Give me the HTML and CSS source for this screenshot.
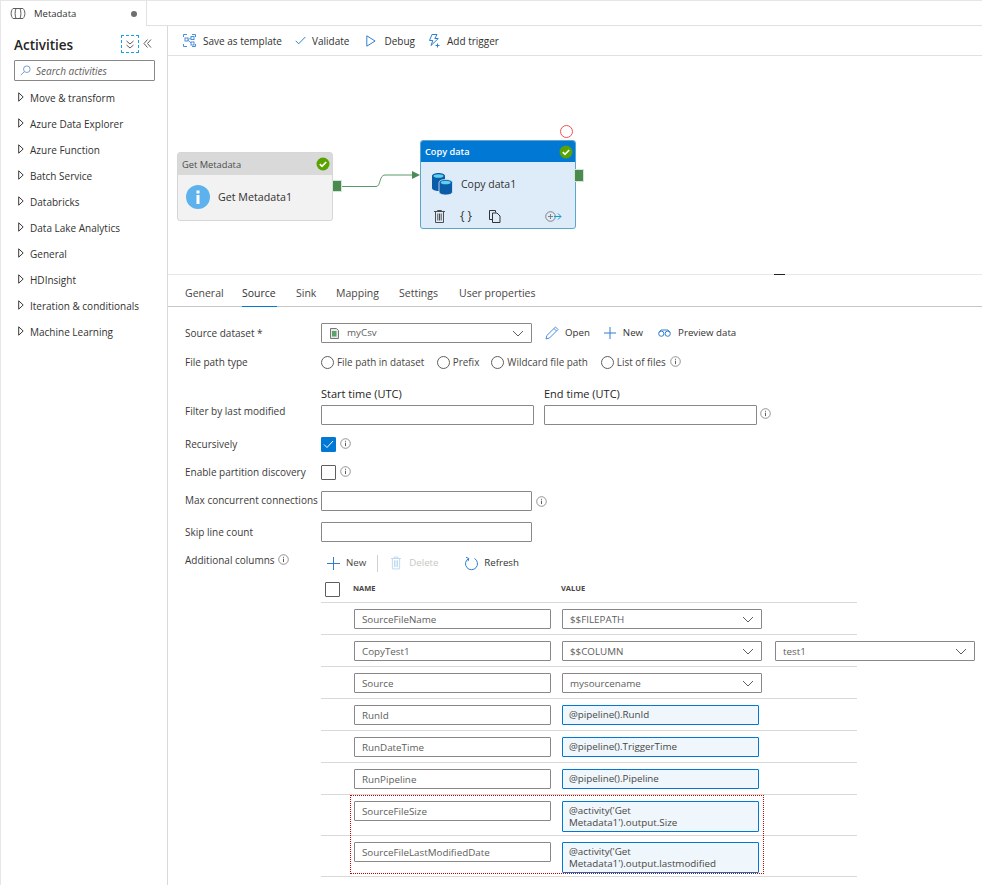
FILE: index.html
```html
<!DOCTYPE html>
<html lang="en">
<head>
<meta charset="utf-8">
<title>Metadata</title>
<link rel="stylesheet" href="styles.css">
</head>
<body>
<svg class="defs" width="0" height="0" aria-hidden="true">
  <symbol id="info" viewBox="0 0 11 11"><circle cx="5.5" cy="5.5" r="4.8" fill="none" stroke="#8a8886" stroke-width=".9"/><path d="M5.5 4.7v3.4" stroke="#605e5c" stroke-width="1"/><path d="M5.5 2.8v1" stroke="#605e5c" stroke-width="1"/></symbol>
  <symbol id="chev" viewBox="0 0 12 7"><path d="M1 1l5 5 5-5" fill="none" stroke="#605e5c" stroke-width="1"/></symbol>
  <symbol id="ok" viewBox="0 0 14 14"><circle cx="7" cy="7" r="6.5" fill="#57a300"/><path d="M3.8 7.2l2.2 2.2 4.2-4.4" fill="none" stroke="#fff" stroke-width="1.7"/></symbol>
  <symbol id="tri" viewBox="0 0 6 10"><path d="M.7.8l4.5 4.2L.7 9.2z" fill="none" stroke="#3b3a39" stroke-width="1"/></symbol>
</svg>

<header class="tabbar">
  <div class="doc-tab">
    <svg class="tab-icon" width="16" height="11" viewBox="0 0 16 11"><path d="M3 .5h10c2.500 2.500 2.500 7.500 0 10H3C.5 8 .5 3 3 .5zM6 .5c-1.200 3-1.200 7 0 10M10 .5c1.200 3 1.200 7 0 10" fill="none" stroke="#605e5c" stroke-width="1"/></svg>
    <span class="tab-name">Metadata</span>
    <span class="dot"></span>
  </div>
</header>

<div class="shell">
  <aside class="sidebar">
    <div class="side-head">
      <h1 class="side-title">Activities</h1>
      <span class="expand"><svg width="10" height="9" viewBox="0 0 10 9"><path d="M1.500 1l3.500 3 3.500-3M1.500 5l3.500 3 3.500-3" fill="none" stroke="#605e5c" stroke-width="1"/></svg></span>
      <svg class="collapse" width="9" height="9" viewBox="0 0 9 9"><path d="M4.500.5L1 4.500l3.500 4M8 .5L4.500 4.500l3.500 4" fill="none" stroke="#605e5c" stroke-width="1"/></svg>
    </div>
    <div class="search">
      <svg width="11" height="11" viewBox="0 0 11 11"><circle cx="6.800" cy="4.200" r="3.300" fill="none" stroke="#7a9fd0" stroke-width="1"/><path d="M4.400 6.600L.8 10.200" stroke="#7a9fd0" stroke-width="1"/></svg>
      <span>Search activities</span>
    </div>
    <ul class="activity-list">
      <li><svg width="6" height="10"><use href="#tri"/></svg>Move &amp; transform</li>
      <li><svg width="6" height="10"><use href="#tri"/></svg>Azure Data Explorer</li>
      <li><svg width="6" height="10"><use href="#tri"/></svg>Azure Function</li>
      <li><svg width="6" height="10"><use href="#tri"/></svg>Batch Service</li>
      <li><svg width="6" height="10"><use href="#tri"/></svg>Databricks</li>
      <li><svg width="6" height="10"><use href="#tri"/></svg>Data Lake Analytics</li>
      <li><svg width="6" height="10"><use href="#tri"/></svg>General</li>
      <li><svg width="6" height="10"><use href="#tri"/></svg>HDInsight</li>
      <li><svg width="6" height="10"><use href="#tri"/></svg>Iteration &amp; conditionals</li>
      <li><svg width="6" height="10"><use href="#tri"/></svg>Machine Learning</li>
    </ul>
  </aside>

  <main class="main">
    <div class="toolbar">
      <span class="tool tool-save">
        <svg width="13" height="13" viewBox="0 0 13 13"><path d="M.5 3V.5H4M9 .5h3.500V3M12.500 10v2.500H9M4 12.500H.5V10" fill="none" stroke="#4a8fd8" stroke-width="1"/><rect x="2" y="4" width="3" height="3" fill="none" stroke="#4a8fd8"/><rect x="8" y="2.500" width="3" height="3" fill="none" stroke="#4a8fd8"/><rect x="8" y="8" width="3" height="3" fill="none" stroke="#4a8fd8"/><path d="M5 5.500l3-1.500M5 6l3 3" stroke="#4a8fd8" stroke-width=".8"/></svg>
        Save as template</span>
      <span class="tool tool-validate">
        <svg width="11" height="9" viewBox="0 0 11 9"><path d="M.7 4.800l3 3L10.300 1" fill="none" stroke="#2f7fd0" stroke-width="1"/></svg>
        Validate</span>
      <span class="tool tool-debug">
        <svg width="10" height="12" viewBox="0 0 10 12"><path d="M.8.8l8.300 5.200L.8 11.200z" fill="none" stroke="#2f7fd0" stroke-width="1"/></svg>
        Debug</span>
      <span class="tool tool-trigger">
        <svg width="12" height="14" viewBox="0 0 12 14"><path d="M4 .5h5L6.800 4.500h3.500L3 11.500l1.800-5H1.500z" fill="none" stroke="#2f7fd0" stroke-width="1"/><path d="M9.500 9.500v4M7.500 11.500h4" stroke="#2f7fd0" stroke-width="1"/></svg>
        Add trigger</span>
    </div>

    <section class="canvas">
      <svg class="wire" width="90" height="30" viewBox="0 0 90 30">
        <path d="M2 22.500H37c5 0 3-11.500 9-11.500H73" fill="none" stroke="#5c9a6a" stroke-width="1"/>
        <path d="M73 7l8 4-8 4z" fill="#4a8b57"/>
      </svg>
      <div class="node node-meta">
        <div class="node-head">Get Metadata<svg class="node-ok" width="14" height="14"><use href="#ok"/></svg></div>
        <div class="node-body">
          <svg width="24" height="24" viewBox="0 0 24 24"><circle cx="12" cy="12" r="12" fill="#5db2ee"/><rect x="10.500" y="10" width="3" height="9" fill="#fff"/><rect x="10.500" y="5.500" width="3" height="3" fill="#fff"/></svg>
          <span>Get Metadata1</span>
        </div>
      </div>
      <span class="handle handle-meta"></span>
      <span class="red-ring"></span>
      <div class="node node-copy">
        <div class="node-head">Copy data<svg class="node-ok" width="14" height="14"><use href="#ok"/></svg></div>
        <div class="node-body">
          <svg width="21" height="22" viewBox="0 0 21 22"><path d="M0 3c0-4 13-4 13 0v12c0 4-13 4-13 0z" fill="#0b5ca8"/><ellipse cx="6.500" cy="3" rx="5" ry="1.800" fill="#5fd0ee"/><path d="M7 9.500c0-4 13.500-4 13.500 0v9.500c0 4-13.500 4-13.500 0z" fill="#0b5ca8" stroke="#deecf9" stroke-width=".8"/><ellipse cx="13.700" cy="9.500" rx="5" ry="1.800" fill="#5fd0ee"/></svg>
          <span>Copy data1</span>
        </div>
        <div class="node-actions">
          <svg width="11" height="13" viewBox="0 0 11 13"><path d="M0 1.500h11M3.500 1.500V.5h4v1M1.500 1.500v11h8v-11M3.800 3.500v7M5.500 3.500v7M7.200 3.500v7" fill="none" stroke="#4d4d4d" stroke-width="1"/></svg>
          <span class="braces">{ }</span>
          <svg width="12" height="13" viewBox="0 0 12 13"><path d="M.5.500h6v2M.5.500v9h3" fill="none" stroke="#333" stroke-width="1"/><path d="M3.500 3h4.500l3 3v6.500h-7.500z" fill="none" stroke="#333" stroke-width="1"/></svg>
          <svg class="go" width="17" height="11" viewBox="0 0 17 11"><circle cx="5.500" cy="5.500" r="4.800" fill="none" stroke="#777" stroke-width=".9"/><path d="M3 5.500h5M5.500 3v5" stroke="#777" stroke-width=".9"/><path d="M9 5.500h7M13 2.500l3 3-3 3" fill="none" stroke="#1a9bd7" stroke-width="1"/></svg>
        </div>
      </div>
      <span class="handle handle-copy"></span>
      <span class="grip"></span>
    </section>

    <nav class="tabs">
      <span class="tab">General</span>
      <span class="tab active">Source</span>
      <span class="tab">Sink</span>
      <span class="tab">Mapping</span>
      <span class="tab">Settings</span>
      <span class="tab">User properties</span>
    </nav>

    <section class="form">
      <div class="row row-dataset">
        <label class="label">Source dataset *</label>
        <div class="select select-dataset">
          <svg class="file" width="9" height="11" viewBox="0 0 9 11"><path d="M.5.500h6l2 2v8h-8z" fill="#e8e8e8" stroke="#777"/><rect x="2" y="3" width="4.500" height="5.500" fill="#5aa469"/></svg>
          <span class="sel-text">myCsv</span>
          <svg class="chev" width="12" height="7"><use href="#chev"/></svg>
        </div>
        <span class="act act-open">
          <svg width="14" height="14" viewBox="0 0 14 14"><path d="M1 13l.8-3.500L10.500 1l2.500 2.500L4.500 12z" fill="none" stroke="#4a8fd8" stroke-width="1"/><path d="M9 2.500L11.500 5" stroke="#4a8fd8"/></svg>
          Open</span>
        <span class="act act-new">
          <svg width="12" height="12" viewBox="0 0 12 12"><path d="M6 0v12M0 6h12" stroke="#2f7fd0" stroke-width="1"/></svg>
          New</span>
        <span class="act act-preview">
          <svg width="13" height="8" viewBox="0 0 13 8"><circle cx="3.300" cy="4.700" r="2.600" fill="none" stroke="#2f7fd0"/><circle cx="9.700" cy="4.700" r="2.600" fill="none" stroke="#2f7fd0"/><path d="M1 3.500L3 1h7l2 2.500" fill="none" stroke="#2f7fd0"/></svg>
          Preview data</span>
      </div>

      <div class="row row-path">
        <label class="label">File path type</label>
        <div class="radios">
          <span class="radio r1"><i></i>File path in dataset</span>
          <span class="radio r2"><i></i>Prefix</span>
          <span class="radio r3"><i></i>Wildcard file path</span>
          <span class="radio"><i></i>List of files<svg class="info-inline" width="11" height="11"><use href="#info"/></svg></span>
        </div>
      </div>

      <div class="row row-time">
        <label class="label">Filter by last modified</label>
        <div class="time-col">
          <span class="time-label">Start time (UTC)</span>
          <span class="input input-time"></span>
        </div>
        <div class="time-col">
          <span class="time-label">End time (UTC)</span>
          <span class="input input-time"></span>
        </div>
        <svg class="info-time" width="11" height="11"><use href="#info"/></svg>
      </div>

      <div class="row row-rec">
        <label class="label label-up">Recursively</label>
        <span class="check checked"><svg width="11" height="9" viewBox="0 0 11 9"><path d="M1 4.500l3 3 6-6.500" fill="none" stroke="#fff" stroke-width="1"/></svg></span>
        <svg class="info-check" width="11" height="11"><use href="#info"/></svg>
      </div>

      <div class="row row-part">
        <label class="label label-up">Enable partition discovery</label>
        <span class="check"></span>
        <svg class="info-check" width="11" height="11"><use href="#info"/></svg>
      </div>

      <div class="row row-max">
        <label class="label label-up">Max concurrent connections</label>
        <span class="input input-wide"></span>
        <svg class="info-max" width="11" height="11"><use href="#info"/></svg>
      </div>

      <div class="row row-skip">
        <label class="label">Skip line count</label>
        <span class="input input-wide"></span>
      </div>

      <div class="row row-add">
        <label class="label label-add">Additional columns<svg class="info-add" width="11" height="11"><use href="#info"/></svg></label>
        <div class="add-tools">
          <span class="add-tool add-new"><svg width="13" height="13" viewBox="0 0 13 13"><path d="M6.500 0v13M0 6.500h13" stroke="#2f7fd0" stroke-width="1"/></svg>New</span>
          <span class="sep"></span>
          <span class="add-tool add-del"><svg width="10" height="14" viewBox="0 0 11 14"><path d="M0 2h11M3.500 2V.5h4V2M1.500 2v11.500h8V2M3.800 4v7.500M5.500 4v7.500M7.200 4v7.500" fill="none" stroke="#b9d6ee" stroke-width="1"/></svg>Delete</span>
          <span class="add-tool add-ref"><svg width="15" height="15" viewBox="0 0 14 15"><path d="M4 2.500a6 6 0 1 0 6 0" fill="none" stroke="#2f7fd0" stroke-width="1"/><path d="M1.500 1.200L4.300 2.500 3.500 5.300" fill="none" stroke="#2f7fd0" stroke-width="1"/></svg>Refresh</span>
        </div>
      </div>

      <div class="table">
        <div class="thead">
          <span class="check head-check"></span>
          <span class="th th-name">NAME</span>
          <span class="th">VALUE</span>
        </div>
        <div class="tr">
          <span class="input cell-name">SourceFileName</span>
          <div class="select cell-sel"><span class="sel-text">$$FILEPATH</span><svg class="chev" width="12" height="7"><use href="#chev"/></svg></div>
        </div>
        <div class="tr">
          <span class="input cell-name">CopyTest1</span>
          <div class="select cell-sel"><span class="sel-text">$$COLUMN</span><svg class="chev" width="12" height="7"><use href="#chev"/></svg></div>
          <div class="select cell-extra"><span class="sel-text">test1</span><svg class="chev" width="12" height="7"><use href="#chev"/></svg></div>
        </div>
        <div class="tr">
          <span class="input cell-name">Source</span>
          <div class="select cell-sel"><span class="sel-text">mysourcename</span><svg class="chev" width="12" height="7"><use href="#chev"/></svg></div>
        </div>
        <div class="tr">
          <span class="input cell-name">RunId</span>
          <span class="expr">@pipeline().RunId</span>
        </div>
        <div class="tr">
          <span class="input cell-name">RunDateTime</span>
          <span class="expr">@pipeline().TriggerTime</span>
        </div>
        <div class="tr">
          <span class="input cell-name">RunPipeline</span>
          <span class="expr">@pipeline().Pipeline</span>
        </div>
        <div class="tr tr-tall">
          <span class="input cell-name">SourceFileSize</span>
          <span class="expr expr-tall">@activity('Get<br>Metadata1').output.Size</span>
        </div>
        <div class="tr tr-tall">
          <span class="input cell-name">SourceFileLastModifiedDate</span>
          <span class="expr expr-tall">@activity('Get<br>Metadata1').output.lastmodified</span>
        </div>
        <span class="red-box"></span>
      </div>
    </section>
  </main>
</div>
</body>
</html>
```

FILE: styles.css
```css
* { box-sizing: border-box; }
html, body { margin: 0; height: 100%; }
body {
  width: 982px;
  height: 885px;
  overflow: hidden;
  background: #fff;
  color: #323130;
  font: 10px/14px "Open Sans", "Noto Sans", sans-serif;
}
.defs { position: absolute; }

.tabbar {
  height: 26px;
  border-top: 1px solid #e6e6e6;
  border-bottom: 1px solid #e1e1e1;
  border-left: 1px solid #e6e6e6;
  display: flex;
}
.doc-tab {
  width: 146px;
  height: 25px;
  background: #fff;
  border-right: 1px solid #e1e1e1;
  display: flex;
  align-items: center;
  padding-left: 9px;
  margin-bottom: -1px;
}
.tab-name { margin-left: 8px; flex: 1; font-size: 9.500px; }
.dot { width: 6px; height: 6px; border-radius: 50%; background: #6e6e6e; margin-right: 9px; }

.shell { display: flex; height: 859px; }
.sidebar {
  width: 168px;
  flex: none;
  border-left: 1px solid #e6e6e6;
  border-right: 1px solid #d9d9d9;
  padding: 8px 18px 0 13px;
}
.side-head { display: flex; align-items: flex-start; height: 26px; position: relative; }
.side-title { margin: 1px 0 0; font-size: 13.500px; line-height: 20px; font-weight: 600; flex: 1; color: #252423; }
.expand {
  width: 18px; height: 18px;
  border: 1px dashed #17a2e8;
  display: flex; align-items: center; justify-content: center;
  margin-top: 1px;
}
.collapse { margin: 5px -3px 0 4px; }
.search {
  height: 21px;
  width: 141px;
  flex: none;
  border: 1px solid #8a8886;
  border-radius: 1px;
  display: flex;
  align-items: center;
  gap: 5px;
  padding-left: 5px;
  color: #605e5c;
  font-style: italic;
  font-size: 10px;
}
.activity-list { list-style: none; margin: 4px 0 0; padding: 0; width: 145px; }
.activity-list li {
  height: 26px;
  display: flex;
  align-items: center;
  padding-left: 4px;
  gap: 6px;
  color: #323130;
  font-weight: 500;
  font-size: 10px;
  white-space: nowrap;
}
.activity-list li svg { margin-top: -3px; }

.main { flex: 1; min-width: 0; display: flex; flex-direction: column; }
.toolbar {
  height: 30px;
  flex: none;
  border-bottom: 1px solid #e1e1e1;
  display: flex;
  align-items: center;
  padding-left: 15px;
}
.tool { display: flex; align-items: center; gap: 7px; }
.tool-save { margin-right: 13px; }
.tool-validate { margin-right: 17px; gap: 6px; }
.tool-debug { margin-right: 13px; gap: 8px; }
.tool-trigger { gap: 7px; }

.canvas {
  position: relative;
  height: 219px;
  flex: none;
  border-bottom: 1px solid #e8e8e8;
}
.wire { position: absolute; left: 171px; top: 108px; }
.node { position: absolute; border-radius: 3px; }
.node-head {
  height: 22px;
  display: flex;
  align-items: center;
  justify-content: space-between;
  padding: 1px 2px 0 4px;
  font-size: 9.300px;
}
.node-ok { margin-top: -1px; }
.node-meta {
  left: 9px; top: 96px;
  width: 156px; height: 69px;
  background: #f2f2f2;
  border: 1px solid #d6d6d6;
}
.node-meta .node-head { background: #d9d9d9; color: #4c4c4c; }
.node-meta .node-head, .node-copy .node-head { border-radius: 2px 2px 0 0; }
.node-meta .node-body { display: flex; align-items: center; gap: 8px; padding: 10px 0 0 8px; font-size: 10.700px; }
.node-copy {
  left: 252px; top: 84px;
  width: 156px; height: 89px;
  background: #deecf9;
  border: 1px solid #5aa7c9;
}
.node-copy .node-head { background: #0078d4; color: #fff; font-weight: 600; height: 21px; font-size: 9.200px; }
.node-copy .node-body { display: flex; align-items: center; gap: 8px; padding: 11px 0 0 11px; font-size: 10.500px; }
.node-actions { display: flex; align-items: center; padding: 11px 0 0 13px; height: 31px; }
.braces { margin-left: 15px; font-size: 12px; color: #333; width: 14px; white-space: nowrap; }
.node-actions .braces + svg { margin-left: 15px; }
.go { margin-left: 44px; }
.handle { position: absolute; width: 8px; height: 10px; background: #4b8b4f; box-shadow: 0 0 0 1px #d3e5d6; }
.handle-meta { left: 165px; top: 125px; }
.handle-copy { left: 407px; top: 114px; height: 11px; }
.red-ring {
  position: absolute; left: 392px; top: 69px;
  width: 13px; height: 13px;
  border: 1px solid #f25050;
  border-radius: 50%;
}
.grip { position: absolute; left: 606px; top: 218px; width: 11px; height: 1px; background: #222; }

.tabs {
  height: 32px;
  flex: none;
  border-bottom: 1px solid #c8c6c4;
  display: grid;
  grid-template-columns: 57px 54px 40px 63px 60px auto;
  justify-items: start;
  padding-left: 17px;
}
.tab { height: 32px; padding: 11px 1px 0 0; font-size: 10.500px; color: #484644; }
.tab.active { border-bottom: 1px solid #0078d4; color: #323130; }

.form { padding: 16px 0 0 17px; position: relative; }
.row { display: flex; }
.label { width: 136px; flex: none; font-weight: 500; color: #3b3a39; white-space: nowrap; }
.label-up { margin-top: -2px; }
.input {
  display: block;
  height: 20px;
  border: 1px solid #8a8886;
  border-radius: 1px;
  background: #fff;
  flex: none;
}
.select {
  height: 20px;
  border: 1px solid #8a8886;
  border-radius: 1px;
  display: flex;
  align-items: center;
  padding: 0 7px;
  flex: none;
  color: #605e5c;
  font-size: 9.800px;
}
.sel-text { flex: 1; }
.cell-sel .sel-text, .cell-extra .sel-text { margin-top: 1px; }
.select-dataset { width: 211px; padding-left: 8px; gap: 8px; }
.act { display: flex; align-items: center; gap: 6px; font-size: 9.700px; }
.act-open { margin-left: 13px; }
.act-new { margin-left: 14px; gap: 7px; }
.act-preview { margin-left: 15px; gap: 7px; }
.row-dataset { height: 20px; align-items: center; }

.row-path { margin-top: 9px; height: 20px; align-items: center; }
.radios { display: flex; align-items: center; font-size: 9.900px; }
.radio { display: flex; align-items: center; gap: 3px; color: #484644; }
.radio i { width: 13px; height: 13px; border: 1px solid #605e5c; border-radius: 50%; display: block; }
.r1 { margin-right: 12.500px; }
.r2 { margin-right: 12px; }
.r3 { margin-right: 13px; }
.info-inline { margin: -2px 0 0 1px; }

.row-time { margin-top: 15px; height: 38px; align-items: flex-end; }
.row-time .label { padding-bottom: 7px; }
.time-col { display: flex; flex-direction: column; width: 213px; margin-right: 10px; }
.time-label { font-size: 11px; line-height: 14px; margin-bottom: 4px; color: #252423; }
.input-time { width: 213px; }
.info-time { margin: 0 0 6px -7px; }

.row-rec { margin-top: 12px; height: 15px; align-items: center; }
.row-part { margin-top: 13px; height: 15px; align-items: center; }
.check { width: 15px; height: 15px; border: 1px solid #605e5c; border-radius: 1px; display: flex; align-items: center; justify-content: center; flex: none; }
.checked { background: #0078d4; border-color: #0078d4; }
.info-check { margin: -3px 0 0 4px; }
.row-max { margin-top: 11px; height: 20px; align-items: center; }
.input-wide { width: 211px; }
.info-max { margin-left: 4px; }
.row-skip { margin-top: 11px; height: 20px; align-items: center; }

.row-add { margin-top: 10px; height: 26px; }
.label-add { display: flex; align-items: center; gap: 3px; height: 18px; margin-top: -1px; }
.info-add { margin-top: -1px; }
.add-tools { display: flex; align-items: center; height: 24px; padding-left: 6px; margin-top: -1px; font-size: 9.700px; }
.add-tool { display: flex; align-items: center; gap: 6px; }
.sep { width: 1px; height: 17px; background: #d2d0ce; margin: 0 13px 0 11px; }
.add-del { color: #c8c6c4; gap: 8px; width: 73px; }
.add-ref { gap: 5px; }
.add-new { color: #484644; }

.table { position: relative; margin-left: 136px; width: 536px; }
.thead { height: 25px; display: flex; align-items: flex-start; border-bottom: 1px solid #d9d9d9; padding: 4px 0 0 4px; }
.head-check { margin-right: 13px; }
.th { font-size: 7.500px; font-weight: 700; color: #484644; margin-top: -1px; }
.th-name { width: 208px; }
.tr {
  height: 32px;
  border-bottom: 1px solid #d9d9d9;
  display: flex;
  padding: 6px 0 0 33px;
  align-items: flex-start;
  position: relative;
}
.tr-tall { height: 41px; padding-top: 6px; }
.cell-name { width: 197px; height: 20px; padding: 3px 7px; color: #605e5c; line-height: 14px; margin-right: 11px; font-size: 9.800px; }
.cell-sel { width: 200px; }
.cell-extra { width: 200px; margin: 0 -239px 0 13px; }
.expr {
  display: block;
  width: 197px;
  height: 20px;
  border: 1px solid #0078d4;
  border-radius: 1px;
  background: #eff6fc;
  padding: 3px 6px;
  line-height: 12px;
  color: #484644;
  flex: none;
  font-size: 9.800px;
}
.expr-tall { height: 31px; }
.red-box {
  position: absolute;
  left: 29px; top: 217px;
  width: 414px; height: 79px;
  border: 1px dotted #d00000;
  pointer-events: none;
}
```
